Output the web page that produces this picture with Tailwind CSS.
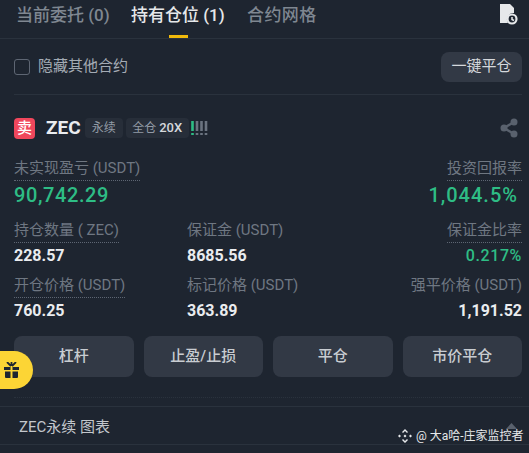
<!DOCTYPE html>
<html lang="zh-CN">
  <head>
    <meta charset="UTF-8" />
    <title>持有仓位</title>
    <script src="https://cdn.jsdelivr.net/npm/@tailwindcss/browser@4"></script>
  </head>
  <body class="bg-[#1e2530] w-[529px] h-[453px] overflow-hidden relative font-['Roboto','Noto_Sans_CJK_SC',sans-serif]">
    <!-- tabs -->
    <div class="h-[39px] flex items-start pl-4 pr-[11px] border-b border-[#2a323d] relative">
      <span class="text-[17px] leading-[31px] text-[#7f8791] font-medium w-[115px] whitespace-nowrap">当前委托 (0)</span>
      <span class="text-[17px] leading-[31px] text-[#e6e8ea] font-medium w-[116px] whitespace-nowrap relative">
        持有仓位 (1)
        <span class="absolute left-[38px] top-[35px] w-[19px] h-[3px] bg-[#f0b90b]"></span>
      </span>
      <span class="text-[17px] leading-[31px] text-[#7f8791] font-medium tracking-[0.4px]">合约网格</span>
      <svg class="ml-auto mt-1" width="18" height="21" viewBox="0 0 18 21">
        <path d="M0 0h10l4 4v5a6.500 6.500 0 0 0-6 10H0z" fill="#e6e8ea" />
        <circle cx="12" cy="15" r="4.500" fill="none" stroke="#e6e8ea" stroke-width="2.200" />
        <path d="M12 13v2.500l2 1" fill="none" stroke="#e6e8ea" stroke-width="1.500" />
      </svg>
    </div>

    <!-- hide other contracts -->
    <div class="ml-[14px] mr-[7px] h-[56px] flex items-center justify-between border-b border-[#2a323d]">
      <label class="flex items-center gap-2 text-[15px] text-[#a4abb4]">
        <span class="w-4 h-4 rounded-[3px] border border-[#5e6673]"></span>
        隐藏其他合约
      </label>
      <button class="w-[81px] h-[30px] rounded-lg bg-[#323945] text-[15px] text-[#d5d8dc]">一键平仓</button>
    </div>

    <!-- position card -->
    <div class="pl-[14px] pr-[7px]">
      <div class="flex items-center h-[24px] mt-[21px]">
        <span class="w-[21px] h-[21px] rounded-[4px] bg-[#f0475c] text-white text-[15px] leading-[21px] text-center font-medium">卖</span>
        <span class="ml-[11px] text-[19px] font-bold text-[#eaecef]">ZEC</span>
        <span class="ml-1 w-[38px] h-[20px] rounded-[4px] bg-[#272e39] text-[12px] leading-[20px] text-center text-[#929aa5]">永续</span>
        <span class="ml-[3px] w-[63px] h-[20px] rounded-[4px] bg-[#272e39] text-[12px] leading-[20px] text-center text-[#929aa5]">全仓 <span class="text-[#d5d8dc] font-medium text-[13px]">20X</span></span>
        <svg class="ml-[2px]" width="17" height="16" viewBox="0 0 17 16">
          <path d="M1.500 1v10M1.500 13v2" stroke="#2ebd85" stroke-width="2.600" />
          <path d="M6 1v10M6 13v2M10.500 1v10M10.500 13v2M15 1v10M15 13v2" stroke="#6b7480" stroke-width="2.600" />
        </svg>
        <svg class="ml-auto mr-1" width="18" height="20" viewBox="0 0 18 20">
          <path d="M14 4 4 10l10 6" fill="none" stroke="#59616d" stroke-width="2.500" />
          <circle cx="14" cy="4" r="3.500" fill="#59616d" />
          <circle cx="4" cy="10" r="3.500" fill="#59616d" />
          <circle cx="14" cy="16" r="3.500" fill="#59616d" />
        </svg>
      </div>

      <div class="flex justify-between mt-[18px]">
        <div>
          <div class="w-fit text-[15px] leading-[21px] pb-[1px] text-[#6f7782] border-b border-dotted border-[#5e6673]">未实现盈亏 (USDT)</div>
          <div class="text-[20px] leading-[30px] font-medium text-[#2ebd85] tracking-[0.6px] -mt-[1px]">90,742.29</div>
        </div>
        <div class="flex flex-col items-end">
          <div class="w-fit text-[15px] leading-[21px] pb-[1px] text-[#6f7782] border-b border-dotted border-[#5e6673]">投资回报率</div>
          <div class="text-[20px] leading-[30px] font-medium text-[#2ebd85] tracking-[1px] mr-[4px] -mt-[1px]">1,044.5%</div>
        </div>
      </div>

      <div class="grid grid-cols-[173px_1fr_auto] gap-y-[6px] mt-[10px]">
        <div>
          <div class="w-fit text-[15px] leading-[21px] pb-[1px] text-[#6f7782] border-b border-dotted border-[#5e6673]">持仓数量 ( ZEC)</div>
          <div class="text-[16px] leading-[26px] font-bold text-[#eaecef]">228.57</div>
        </div>
        <div>
          <div class="text-[15px] leading-[21px] pb-[2px] text-[#6f7782]">保证金 (USDT)</div>
          <div class="text-[16px] leading-[26px] font-bold text-[#eaecef]">8685.56</div>
        </div>
        <div class="flex flex-col items-end">
          <div class="w-fit text-[15px] leading-[21px] pb-[1px] text-[#6f7782] border-b border-dotted border-[#5e6673]">保证金比率</div>
          <div class="text-[16px] leading-[26px] font-medium text-[#2ebd85] tracking-[0.6px]">0.217%</div>
        </div>
        <div>
          <div class="w-fit text-[15px] leading-[21px] pb-[1px] text-[#6f7782] border-b border-dotted border-[#5e6673]">开仓价格 (USDT)</div>
          <div class="text-[16px] leading-[26px] font-bold text-[#eaecef]">760.25</div>
        </div>
        <div>
          <div class="text-[15px] leading-[21px] pb-[2px] text-[#6f7782]">标记价格 (USDT)</div>
          <div class="text-[16px] leading-[26px] font-bold text-[#eaecef]">363.89</div>
        </div>
        <div class="flex flex-col items-end">
          <div class="text-[15px] leading-[21px] pb-[2px] text-[#6f7782]">强平价格 (USDT)</div>
          <div class="text-[16px] leading-[26px] font-bold text-[#eaecef]">1,191.52</div>
        </div>
      </div>

      <div class="grid grid-cols-4 gap-[10px] mt-[12px] pb-5 border-b border-dotted border-[#2a323d]">
        <button class="h-[41px] rounded-lg bg-[#323945] text-[15px] font-medium text-[#c8ccd1]">杠杆</button>
        <button class="h-[41px] rounded-lg bg-[#323945] text-[15px] font-medium text-[#c8ccd1]">止盈/止损</button>
        <button class="h-[41px] rounded-lg bg-[#323945] text-[15px] font-medium text-[#c8ccd1]">平仓</button>
        <button class="h-[41px] rounded-lg bg-[#323945] text-[15px] font-medium text-[#c8ccd1]">市价平仓</button>
      </div>
    </div>

    <!-- chart section -->
    <div class="mt-[8px] h-[39px] border-y border-[#2a323d] pl-[19px] text-[15px] leading-[41px] text-[#c3c7cc]">ZEC永续 图表</div>

    <!-- gift -->
    <div class="absolute left-0 top-[351px] w-[33px] h-[38px] bg-[#fcd535] rounded-r-[19px] flex items-center pl-1">
      <svg width="15" height="16" viewBox="0 0 15 16" fill="#1e2530">
        <path d="M0 5h6.500v3H0zM8.500 5H15v3H8.500zM1 9.500h5.500V16H2a1 1 0 0 1-1-1zM8.500 9.500H14V15a1 1 0 0 1-1 1H8.500z" />
        <path d="M3 0l4 4M7.500 0v4M12 0 8 4" stroke="#1e2530" stroke-width="1.800" />
      </svg>
    </div>

    <!-- collapse arrow -->
    <svg class="absolute left-[506px] top-[423px]" width="11" height="6" viewBox="0 0 11 6">
      <path d="M5.500 0 11 6H0z" fill="#59616d" />
    </svg>

    <!-- watermark -->
    <div class="absolute left-[398px] top-[426px] flex items-center gap-[4px] text-[12px] leading-[20px] text-[#e6e8ea] whitespace-nowrap">
      <svg width="14" height="14" viewBox="0 0 14 14" fill="#e6e8ea">
        <path d="M7 0l3 3-1 1-2-2-2 2-1-1zM7 14l3-3-1-1-2 2-2-2-1 1zM0 7l1.500-1.500L3 7 1.500 8.500zM11 7l1.500-1.500L14 7l-1.500 1.500zM7 5.500 8.500 7 7 8.500 5.500 7z" />
      </svg>
      <span>@ 大a哈-庄家监控者</span>
    </div>
  </body>
</html>
